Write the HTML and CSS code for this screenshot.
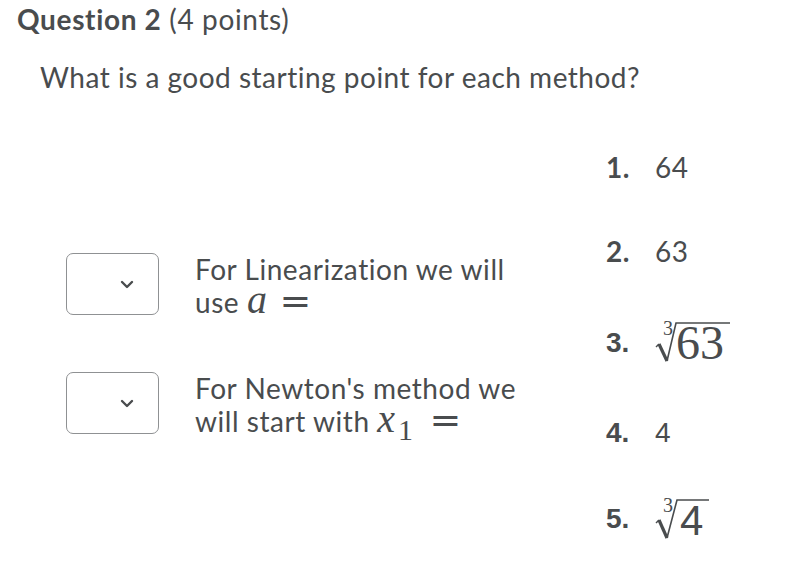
FILE: index.html
```html
<!DOCTYPE html>
<html>
<head>
<meta charset="utf-8">
<link rel="stylesheet" href="styles.css">
</head>
<body>
<div class="page">
  <h1 class="q-title"><span class="q-name">Question 2</span> <span class="q-points">(4 points)</span></h1>
  <p class="prompt">What is a good starting point for each method?</p>
  <div class="match">
    <div class="pairs">
      <div class="pair">
        <div class="select"><svg class="chev" width="14" height="9" viewBox="0 0 14 9"><path d="M2 2 L7 7 L12 2" fill="none" stroke="#494c4e" stroke-width="2.4" stroke-linecap="round" stroke-linejoin="round"/></svg></div>
        <div class="label">For Linearization we will<br>use <span class="mi">a</span> <span class="mo">=</span></div>
      </div>
      <div class="pair">
        <div class="select"><svg class="chev" width="14" height="9" viewBox="0 0 14 9"><path d="M2 2 L7 7 L12 2" fill="none" stroke="#494c4e" stroke-width="2.4" stroke-linecap="round" stroke-linejoin="round"/></svg></div>
        <div class="label">For Newton's method we<br>will start with <span class="mi">x</span><span class="msub">1</span> <span class="mo mo-2">=</span></div>
      </div>
    </div>
    <ol class="answers">
      <li class="ans ans-1"><span class="num">1.</span><span class="val">64</span></li>
      <li class="ans ans-2"><span class="num">2.</span><span class="val">63</span></li>
      <li class="ans ans-3"><span class="num alt">3.</span><span class="root root-63"><svg class="rad rad-63" width="77" height="46" viewBox="0 0 77 46"><path d="M1 26 L4 23" stroke="#494c4e" stroke-width="1.4" fill="none"/><path d="M4 23 L12 40" stroke="#494c4e" stroke-width="3.2" fill="none"/><path d="M12 40 L21 2 H75" stroke="#494c4e" stroke-width="1.6" fill="none"/></svg><span class="idx idx-63">3</span><span class="under serif">63</span></span></li>
      <li class="ans ans-4"><span class="num alt">4.</span><span class="val alt-val">4</span></li>
      <li class="ans ans-5"><span class="num alt">5.</span><span class="root root-4"><svg class="rad rad-4" width="56" height="46" viewBox="0 0 56 46"><path d="M1 25 L4 22" stroke="#494c4e" stroke-width="1.4" fill="none"/><path d="M4 22 L12 40" stroke="#494c4e" stroke-width="3.2" fill="none"/><path d="M12 40 L22 2 H54" stroke="#494c4e" stroke-width="1.6" fill="none"/></svg><span class="idx idx-4">3</span><span class="under sans">4</span></span></li>
    </ol>
  </div>
</div>
</body>
</html>
```
FILE: styles.css
```css
html, body {
  margin: 0;
  padding: 0;
  background: #ffffff;
}
body {
  font-family: Lato, "Liberation Sans", sans-serif;
  color: #494c4e;
}
.page {
  padding: 2px 0 0 17px;
}
.q-title {
  margin: 0;
  font-size: 28px;
  line-height: 34px;
  font-weight: normal;
  letter-spacing: 0.65px;
}
.q-name {
  font-weight: 700;
}
.prompt {
  margin: 24px 0 0 23px;
  font-size: 28px;
  line-height: 34px;
  letter-spacing: 0.5px;
}
.match {
  display: flex;
  align-items: flex-start;
}
.pairs {
  width: 589px;
  padding-top: 159px;
  display: flex;
  flex-direction: column;
  gap: 53px;
}
.pair {
  display: flex;
  align-items: flex-start;
  padding-left: 49px;
}
.select {
  width: 93px;
  height: 62px;
  border: 1px solid #8f9193;
  border-radius: 7px;
  display: flex;
  align-items: center;
  justify-content: flex-end;
  padding-right: 24px;
  box-sizing: border-box;
  flex: none;
}
.chev {
  display: block;
}
.label {
  margin-left: 36px;
  font-size: 28px;
  line-height: 33px;
  letter-spacing: 0.55px;
}
.mi {
  font-family: "Liberation Serif", "DejaVu Serif", serif;
  font-style: italic;
  font-size: 40px;
  line-height: 0;
  letter-spacing: 0;
}
.msub {
  font-family: "Liberation Serif", serif;
  font-size: 30px;
  line-height: 0;
  vertical-align: -8px;
  margin-left: 3px;
}
.mo {
  font-family: "DejaVu Serif", "Liberation Serif", serif;
  font-size: 38px;
  line-height: 0;
  margin-left: 5px;
  letter-spacing: 0;
  vertical-align: -1px;
}
.mo-2 {
  margin-left: 8px;
}
.answers {
  list-style: none;
  margin: 58px 0 0 0;
  padding: 0;
}
.ans {
  display: block;
  font-size: 28px;
  line-height: 30px;
  letter-spacing: 0.5px;
  white-space: nowrap;
}
.ans-1 { height: 84px; }
.ans-2 { height: 90px; }
.ans-3 { height: 90px; }
.ans-4 { height: 86px; }
.ans-5 { height: 40px; }
.num {
  display: inline-block;
  font-weight: 700;
  width: 49px;
}
.num.alt {
  font-family: "Liberation Sans", Arial, sans-serif;
  letter-spacing: 0;
}
.alt-val {
  font-family: "Liberation Sans", Arial, sans-serif;
  letter-spacing: 0;
}
.root {
  position: relative;
  display: inline-block;
  line-height: 20px;
  letter-spacing: 0;
}
.root-63 {
  vertical-align: -7px;
  padding-left: 21px;
}
.root-4 {
  vertical-align: -7px;
  padding-left: 25px;
}
.rad {
  position: absolute;
  left: 0;
}
.rad-63 {
  top: -12px;
}
.rad-4 {
  top: -13px;
}
.idx {
  position: absolute;
  left: 8px;
  font-family: "Liberation Serif", serif;
  font-size: 20px;
  line-height: 20px;
}
.idx-63 {
  top: -15px;
}
.idx-4 {
  top: -16px;
}
.under.serif {
  font-family: "Liberation Serif", serif;
  font-size: 48px;
}
.under.sans {
  font-family: "Liberation Sans", sans-serif;
  font-size: 42px;
}
```
